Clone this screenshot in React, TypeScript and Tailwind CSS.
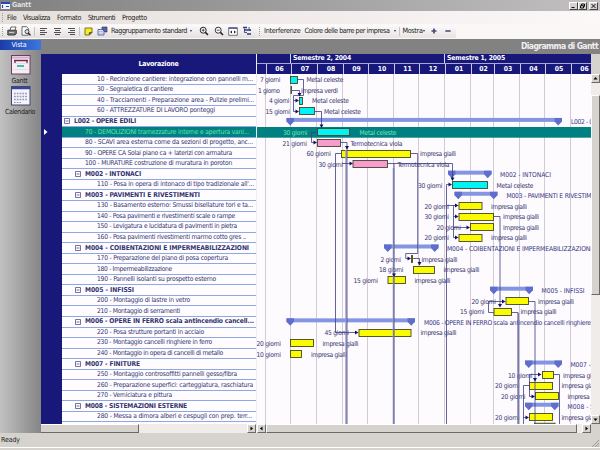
/**
 * Gantt planner window
 * Task outline on the left, time chart with dependencies on the right
 */
import React from 'react';

type Row = { label: string; level: 0 | 1 | 2 | 3; w: number };

// level 0 / 1 are group headings, 2 / 3 are tasks (2 = direct child of a top group)
// w is the printed width of the label
const rows: Row[] = [
  { label: '10 - Recinzione cantiere: integrazione con pannelli m...', level: 3, w: 156 },
  { label: '30 - Segnaletica di cantiere', level: 3, w: 76 },
  { label: '40 - Tracciamenti - Preparazione area - Pulizie prelimi...', level: 3, w: 157 },
  { label: '60 - ATTREZZATURE DI LAVORO ponteggi', level: 3, w: 118 },
  { label: 'L002 - OPERE EDILI', level: 0, w: 62 },
  { label: '70 - DEMOLIZIONI tramezzature interne e apertura vani...', level: 2, w: 164 },
  { label: '80 - SCAVI area esterna come da sezioni di progetto, anc...', level: 2, w: 168 },
  { label: '90 - OPERE CA Solai piano ca + laterizi con armatura', level: 2, w: 147 },
  { label: '100 - MURATURE costruzione di muratura in poroton', level: 2, w: 147 },
  { label: 'M002 - INTONACI', level: 1, w: 56 },
  { label: "110 - Posa in opera di intonaco di tipo tradizionale all'...", level: 3, w: 157 },
  { label: 'M003 - PAVIMENTI E RIVESTIMENTI', level: 1, w: 115 },
  { label: '130 - Basamento esterno: Smussi bisellature tori e ta...', level: 3, w: 156 },
  { label: '140 - Posa pavimenti e rivestimenti scale o rampe', level: 3, w: 138 },
  { label: '150 - Levigatura e lucidatura di pavimenti in pietra', level: 3, w: 140 },
  { label: '160 - Posa pavimenti rivestimenti marmo cotto gres ..', level: 3, w: 149 },
  { label: 'M004 - COIBENTAZIONI E IMPERMEABILIZZAZIONI', level: 1, w: 164 },
  { label: '170 - Preparazione del piano di posa copertura', level: 3, w: 131 },
  { label: '180 - Impermeabilizzazione', level: 3, w: 75 },
  { label: '190 - Pannelli isolanti su prospetto esterno', level: 3, w: 119 },
  { label: 'M005 - INFISSI', level: 1, w: 49 },
  { label: '200 - Montaggio di lastre in vetro', level: 3, w: 93 },
  { label: '210 - Montaggio di serramenti', level: 3, w: 83 },
  { label: 'M006 - OPERE IN FERRO scala antincendio cancell...', level: 1, w: 169 },
  { label: '220 - Posa strutture portanti in acciaio', level: 3, w: 107 },
  { label: '230 - Montaggio cancelli ringhiere in ferro', level: 3, w: 115 },
  { label: '240 - Montaggio in opera di cancelli di metallo', level: 3, w: 126 },
  { label: 'M007 - FINITURE', level: 1, w: 55 },
  { label: '250 - Montaggio controsoffitti pannelli gesso/fibra', level: 3, w: 140 },
  { label: '260 - Preparazione superfici: carteggiatura, raschiatura', level: 3, w: 156 },
  { label: '270 - Verniciatura e pittura', level: 3, w: 75 },
  { label: 'M008 - SISTEMAZIONI ESTERNE', level: 1, w: 102 },
  { label: '280 - Messa a dimora alberi e cespugli con prep. terr...', level: 3, w: 155 },
];

const SELECTED = 5;
const ROW_H = 10.55;
const rowY = (i: number) => 79.7 + i * ROW_H;

const padding = ['pl-[2px]', 'pl-[13px]', 'pl-[23px]', 'pl-[35px]'];

type Bar = { row: number; x1: number; x2: number; color: string; left: string; lx: number; right: string; rx: number };

const CYAN = '#00f4f4';
const PINK = '#f79ccc';
const YELLOW = '#fbfb00';

const bars: Bar[] = [
  { row: 0, x1: 290.5, x2: 297.5, color: CYAN, left: '7 giorni', lx: 260, right: 'Metal celeste', rx: 306.5 },
  { row: 1, x1: 291, x2: 291.5, color: '#00a000', left: '1 giorno', lx: 258, right: 'impresa verdi', rx: 301 },
  { row: 2, x1: 299.5, x2: 302.5, color: CYAN, left: '4 giorni', lx: 269, right: 'Metal celeste', rx: 312 },
  { row: 3, x1: 299.5, x2: 314.5, color: CYAN, left: '15 giorni', lx: 265.5, right: 'Metal celeste', rx: 324 },
  { row: 5, x1: 317.5, x2: 349.5, color: CYAN, left: '30 giorni', lx: 283, right: 'Metal celeste', rx: 359.5 },
  { row: 6, x1: 317.5, x2: 340.5, color: PINK, left: '21 giorni', lx: 282.5, right: 'Termotecnica viola', rx: 350.5 },
  { row: 7, x1: 341.5, x2: 410.5, color: YELLOW, left: '60 giorni', lx: 306.5, right: 'impresa gialli', rx: 420 },
  { row: 8, x1: 353, x2: 387.5, color: PINK, left: '30 giorni', lx: 318.5, right: 'Termotecnica viola', rx: 397.5 },
  { row: 10, x1: 452.5, x2: 487.5, color: CYAN, left: '30 giorni', lx: 418, right: 'Metal celeste', rx: 496.5 },
  { row: 12, x1: 459, x2: 482, color: YELLOW, left: '20 giorni', lx: 424.5, right: 'impresa gialli', rx: 491 },
  { row: 13, x1: 459, x2: 493.5, color: YELLOW, left: '30 giorni', lx: 424.5, right: 'impresa gialli', rx: 503 },
  { row: 14, x1: 470.5, x2: 493.5, color: YELLOW, left: '20 giorni', lx: 436.5, right: 'impresa gialli', rx: 503 },
  { row: 15, x1: 459, x2: 482, color: YELLOW, left: '20 giorni', lx: 424.5, right: 'impresa gialli', rx: 491 },
  { row: 17, x1: 411.5, x2: 412.5, color: YELLOW, left: '2 giorni', lx: 380.5, right: 'impresa gialli', rx: 421.5 },
  { row: 18, x1: 413.5, x2: 434.5, color: YELLOW, left: '18 giorni', lx: 379, right: 'impresa gialli', rx: 443.5 },
  { row: 19, x1: 388, x2: 405.5, color: YELLOW, left: '15 giorni', lx: 353.5, right: 'impresa gialli', rx: 414.5 },
  { row: 21, x1: 506, x2: 528.5, color: YELLOW, left: '20 giorni', lx: 471.5, right: 'impresa gialli', rx: 538 },
  { row: 22, x1: 494, x2: 511.5, color: YELLOW, left: '15 giorni', lx: 460, right: 'impresa gialli', rx: 520.5 },
  { row: 24, x1: 359, x2: 411, color: YELLOW, left: '45 giorni', lx: 324.5, right: 'impresa gialli', rx: 420.5 },
  { row: 25, x1: 290.5, x2: 313.5, color: YELLOW, left: '20 giorni', lx: 256.5, right: 'impresa gialli', rx: 322.5 },
  { row: 26, x1: 290.5, x2: 301.5, color: YELLOW, left: '10 giorni', lx: 256.5, right: 'impresa gialli', rx: 311 },
  { row: 28, x1: 542.5, x2: 553.5, color: YELLOW, left: '10 giorni', lx: 508, right: 'impresa gialli', rx: 563 },
  { row: 29, x1: 529.5, x2: 552.5, color: YELLOW, left: '20 giorni', lx: 495, right: 'impresa gialli', rx: 561.5 },
  { row: 30, x1: 535.5, x2: 558.5, color: YELLOW, left: '20 giorni', lx: 501, right: 'impresa gialli', rx: 567.5 },
  { row: 32, x1: 529.5, x2: 552.5, color: YELLOW, left: '20 giorni', lx: 495, right: 'impresa gialli', rx: 561.5 },
];

const textWidth: Record<string, number> = {
  'Metal celeste': 37,
  'impresa verdi': 37,
  'impresa gialli': 36,
  'Termotecnica viola': 52,
  '1 giorno': 22,
};

const summaries = [
  { row: 4, x1: 286.5, x2: 562, label: 'L002 - OPERE EDILI', lx: 571, w: 52 },
  { row: 9, x1: 448, x2: 491.5, label: 'M002 - INTONACI', lx: 500, w: 51 },
  { row: 11, x1: 454.5, x2: 497.5, label: 'M003 - PAVIMENTI E RIVESTIMENTI', lx: 506.5, w: 98 },
  { row: 16, x1: 384, x2: 438.5, label: 'M004 - COIBENTAZIONI E IMPERMEABILIZZAZIONI', lx: 447, w: 145 },
  { row: 20, x1: 490, x2: 533, label: 'M005 - INFISSI', lx: 541.5, w: 43 },
  { row: 23, x1: 286.5, x2: 415, label: 'M006 - OPERE IN FERRO scala antincendio cancelli ringhiere', lx: 424, w: 167 },
  { row: 27, x1: 525, x2: 562, label: 'M007 - FINITURE', lx: 570.5, w: 49 },
  { row: 31, x1: 525, x2: 558.5, label: 'M008 - SISTEMAZIONI', lx: 567.5, w: 66 },
];

const gridX = [265.5, 290.5, 316.5, 342.5, 367.5, 393.5, 418.5, 444.5, 470.5, 493.5, 519.5, 544.5, 570.5];

const links = [
  'M298 79.5H303.5V95.5H293.5V111.5H297 M293.5 100.5H297',
  'M291 90.5H299.5V94',
  'M315 111.5H321.5V126',
  'M317 132.5H311.5V142.5H315',
  'M341 142.5H347V424 M342 163.5H351',
  'M341 153.5H335.5V332.5H357',
  'M411 153.5H417.7V253.5H405.7V258.5H409',
  'M388 163.5H394V424',
  'M394 163.5H452.5V178',
  'M413 258.5H419.5V263',
  'M450 184.5H446.5V424',
  'M447 205.5H457 M453.5 205.5V237.5H457 M453.5 216.5H457 M453.5 227.5H469',
  'M494 216.5H500V305',
  'M504 301.5H488.5V312.5H494',
  'M529 301.5H535V424',
  'M511.5 312.5H518V424',
  'M540 374.5H529.5V396.5H533',
  'M553.5 374.5H559.5V424',
  'M529.5 385.5H523.5V424 M523.5 417.5H527',
];

const rightArrows = [
  [299, 111.5], [299, 100.5], [317, 142.5], [353, 163.5], [358.5, 332.5], [411, 258.5], [452, 184.5],
  [458.5, 205.5], [458.5, 216.5], [458.5, 237.5], [470, 227.5], [505.5, 301.5], [541.5, 374.5], [535, 396.5], [529, 417.5],
];

const downArrows = [
  [299.5, 96.5], [321.5, 128], [347, 149.5], [394, 277], [452.5, 181], [419.5, 265.5], [500, 307.5], [535, 381.5],
];

const months: [string, string][] = [
  ['', 'w-[9px]'], ['06', 'w-[25px]'], ['07', 'w-[26px]'], ['08', 'w-[26px]'], ['09', 'w-[25px]'],
  ['10', 'w-[26px]'], ['11', 'w-[25px]'], ['12', 'w-[26px]'], ['01', 'w-[26px]'], ['02', 'w-[23px]'],
  ['03', 'w-[26px]'], ['04', 'w-[25px]'], ['05', 'w-[26px]'], ['06', 'w-[25px]'],
];

// Fits a bold or regular label to its printed width
const FittedLabel: React.FC<{ text: string; width: number }> = ({ text, width }) => {
  const ref = React.useRef<HTMLSpanElement>(null);
  const [spacing, setSpacing] = React.useState(0);

  React.useLayoutEffect(() => {
    if (ref.current) {
      setSpacing((width - ref.current.getBoundingClientRect().width) / text.length);
    }
  }, [text, width]);

  return (
    <span ref={ref} className="whitespace-pre" style={{ letterSpacing: `${spacing}px` }}>
      {text}
    </span>
  );
};

const ArrowButton: React.FC<{ dir: 'left' | 'right' | 'up' | 'down' }> = ({ dir }) => {
  const d = {
    left: 'M5.5 2.5V6.5L3 4.5Z',
    right: 'M3.5 2.5V6.5L6 4.5Z',
    up: 'M2.5 5.5H6.5L4.5 3Z',
    down: 'M2.5 3.5H6.5L4.5 6Z',
  }[dir];
  return (
    <span className="flex h-[9px] w-[9px] shrink-0 border-t border-l border-r border-b border-t-white border-l-white border-r-[#6b6965] border-b-[#6b6965] bg-[#d6d3ce]">
      <svg viewBox="1 1 7 7" className="h-[7px] w-[7px]"><path d={d} fill="#000" /></svg>
    </span>
  );
};

const Grip = () => <span className="h-[9px] w-px shrink-0 border-l border-dotted border-[#a09c98]" />;

const TaskRow: React.FC<{ row: Row; selected: boolean }> = ({ row, selected }) => {
  const group = row.level < 2;
  return (
    <div
      className={`flex h-[10.55px] shrink-0 items-center overflow-hidden border-b border-[#8fa8e2] ${padding[row.level]} ${
        selected ? 'bg-[#008080] text-[#5fe8b0]' : 'bg-[#fefcff] text-[#34346e]'
      } ${group ? 'font-bold text-[#15155c]' : ''}`}
    >
      {group && (
        <svg viewBox="0 0 6 6" className="mr-[4px] h-[6px] w-[6px] shrink-0">
          <path d="M.5 .5H5.5V5.5H.5Z M1.5 3H4.5" fill="none" stroke="#50508c" strokeWidth=".8" />
        </svg>
      )}
      <FittedLabel text={row.label} width={row.w} />
    </div>
  );
};

const Chart = () => (
  <svg viewBox="257 74 334 350" className="block h-[350px] w-[334px] bg-[#fefbff]" fontSize="6.7">
    {gridX.map((x) => (
      <path key={x} d={`M${x} 74V424`} stroke="#d2ccd6" />
    ))}
    <rect x="257" y="127" width="334" height="10.7" fill="#008080" />

    {summaries.map((s) => {
      const y = rowY(s.row);
      return (
        <g key={s.row}>
          <rect x={s.x1} y={y - 4} width={s.x2 - s.x1} height="4" fill="#8496e2" />
          <path d={`M${s.x1} ${y - 4}h7.5v3.5l-3.7 4l-3.8 -4Z M${s.x2} ${y - 4}h-7.5v3.5l3.7 4l3.8 -4Z`} fill="#5f6dcc" />
          <text x={s.lx} y={y + 2.3} textLength={s.w} fill="#333380">{s.label}</text>
        </g>
      );
    })}

    {bars.map((b) => {
      const y = Math.round(rowY(b.row));
      const fill = b.row === SELECTED ? '#6fe8b8' : '#34346e';
      return (
        <g key={b.row}>
          <rect x={b.x1} y={y - 3.5} width={b.x2 - b.x1} height="7" fill={b.color} stroke="#45452c" strokeWidth=".9" />
          <text x={b.lx} y={rowY(b.row) + 2.5} textLength={textWidth[b.left] ?? (b.left.length > 8 ? 24.5 : 20.5)} fill={fill}>{b.left}</text>
          <text x={b.rx} y={rowY(b.row) + 2.5} textLength={textWidth[b.right]} fill={fill}>{b.right}</text>
        </g>
      );
    })}
    <rect x="534.5" y="423.3" width="20.5" height="4" fill={YELLOW} stroke="#45452c" />

    {/* dependencies */}
    <path d="M346 150V424 M393.5 168V424 M518.5 313V424" stroke="#a4a4c8" strokeWidth="1.6" fill="none" />
    {links.map((d) => (
      <path key={d} d={d} fill="none" stroke="#3c3c86" strokeWidth=".8" />
    ))}
    {rightArrows.map(([x, y]) => (
      <path key={`${x}-${y}`} d={`M${x} ${y}l-3.5 -2v4Z`} fill="#14145c" />
    ))}
    {downArrows.map(([x, y]) => (
      <path key={`${x}-${y}`} d={`M${x} ${y}l-2 -3.5h4Z`} fill="#14145c" />
    ))}
  </svg>
);

const AlignIcon: React.FC<{ d: string }> = ({ d }) => (
  <svg viewBox="0 0 9 9" className="h-[9px] w-[9px] shrink-0"><path d={d} stroke="#505050" strokeWidth="1" /></svg>
);

const Toolbar = () => (
  <div className="flex h-[15px] shrink-0 items-center bg-[#fbf7f6] pb-px text-[7.2px] text-[#222]">
    <div className="flex h-[13px] w-[255px] items-center bg-linear-to-b from-[#fcfafa] to-[#e4e0e0] pl-[2px]">
      <Grip />
      {/* print */}
      <svg viewBox="0 0 10 10" className="ml-[4px] h-[10px] w-[10px]">
        <path d="M3 4L4 1H9L8 4" fill="#fff" stroke="#444" strokeWidth=".8" />
        <path d="M.8 4.2H9.3V7.5L8 9H.8Z" fill="#777" stroke="#222" strokeWidth=".8" />
        <path d="M2 6.5H7" stroke="#ddd" strokeWidth=".8" />
      </svg>
      {/* preview */}
      <svg viewBox="0 0 10 10" className="ml-[4px] h-[10px] w-[10px]">
        <path d="M1 .7H5.5L7.3 2.5V9.2H1Z" fill="#fff" stroke="#444" strokeWidth=".8" />
        <circle cx="6" cy="5.6" r="2" fill="#dde6f0" stroke="#222" strokeWidth=".8" />
        <path d="M7.4 7L9.5 9.4" stroke="#222" strokeWidth="1.2" />
      </svg>
      <span className="mr-[4px] ml-[3px] h-[9px] w-px bg-[#c9c4c4]" />
      <AlignIcon d="M1 1.5H8M1 3.5H6M1 5.5H8M1 7.5H6" />
      <span className="w-[5px]" />
      <AlignIcon d="M1 1.5H8M2 3.5H7M1 5.5H8M2 7.5H7" />
      <span className="w-[5px]" />
      <AlignIcon d="M1 1.5H8M3 3.5H8M1 5.5H8M3 7.5H8" />
      <span className="mr-[4px] ml-[3px] h-[9px] w-px bg-[#c9c4c4]" />
      {/* note */}
      <svg viewBox="0 0 9 9" className="h-[9px] w-[9px]">
        <path d="M1 1H8V5.5L5.5 8H1Z" fill="#f6ee20" stroke="#6e6a10" strokeWidth=".9" />
        <path d="M5.3 8V5.5H8" fill="#555" stroke="#444" strokeWidth=".7" />
      </svg>
      {/* grouping */}
      <svg viewBox="0 0 11 10" className="ml-[4px] h-[10px] w-[11px]">
        <path d="M1 3.5H7V9H1Z" fill="#e8ecfa" stroke="#3a4a8c" strokeWidth=".8" />
        <path d="M5 1H10V6H8L5 3Z" fill="#56689e" stroke="#2b3a78" strokeWidth=".7" />
        <path d="M2 5.5H6M2 7.2H6" stroke="#8694c0" strokeWidth=".6" />
      </svg>
      <span className="ml-[3px]"><FittedLabel text="Raggruppamento standard" width={76} /></span>
      <span className="ml-[3px] border-x-[1.5px] border-t-2 border-x-transparent border-t-[#333]" />
      {/* zoom tools */}
      <svg viewBox="0 0 10 10" className="ml-[7px] h-[10px] w-[10px]">
        <circle cx="4.2" cy="4.2" r="3" fill="#fff" stroke="#222" />
        <path d="M2.7 4.2H5.7M4.2 2.7V5.7" stroke="#222" strokeWidth=".8" />
        <path d="M6.4 6.4L9 9" stroke="#222" strokeWidth="1.5" />
      </svg>
      <svg viewBox="0 0 10 10" className="ml-[5px] h-[10px] w-[10px]">
        <circle cx="4.2" cy="4.2" r="3" fill="#fff" stroke="#222" strokeWidth=".9" />
        <path d="M2.7 4.2H5.7" stroke="#222" strokeWidth=".8" />
        <path d="M6.4 6.4L9 9" stroke="#222" strokeWidth="1.5" />
      </svg>
      <svg viewBox="0 0 10 9" className="ml-[4px] h-[9px] w-[10px]">
        <path d="M.7 .7H9.3V8.3H.7Z" fill="#fff" stroke="#555" strokeWidth=".8" />
        <path d="M.7 1.2H9.3" stroke="#3a4a9c" strokeWidth="1.2" />
        <path d="M2 5L4 3.5V6.5ZM8 5L6 3.5V6.5Z" fill="#222" />
      </svg>
      <svg viewBox="0 0 10 10" className="ml-[4px] h-[10px] w-[10px]">
        <path d="M1 1.5H5M2 4H9M5 8H9" stroke="#2b3a9c" strokeWidth="1.6" />
        <path d="M2.5 2.5V6.5H5M7 1V3L8.5 5" stroke="#333" strokeWidth=".8" fill="none" />
      </svg>
    </div>
    <div className="flex h-[13px] w-[201px] items-center bg-linear-to-b from-[#fcfafa] to-[#e8e4e4] pl-[4px]">
      <Grip />
      <span className="ml-[4px]"><FittedLabel text="Interferenze" width={36.5} /></span>
      <span className="ml-[4px]"><FittedLabel text="Colore delle barre per impresa" width={85} /></span>
      <span className="ml-[4px] border-x-[1.5px] border-t-2 border-x-transparent border-t-[#333]" />
      <span className="mr-[3px] ml-[3px] h-[9px] w-px bg-[#c9c4c4]" />
      <FittedLabel text="Mostra" width={20} />
      <span className="border-x-[1.5px] border-t-2 border-x-transparent border-t-[#333]" />
      <svg viewBox="0 0 6 6" className="ml-[6px] h-[6px] w-[6px]"><path d="M3 .5V5.5M.5 3H5.5" stroke="#4a4a78" strokeWidth="1.7" /></svg>
      <svg viewBox="0 0 6 6" className="ml-[8px] h-[6px] w-[6px]"><path d="M.3 3H5.7" stroke="#4a4a78" strokeWidth="1.5" /></svg>
    </div>
  </div>
);

const WindowButton: React.FC<{ d: string }> = ({ d }) => (
  <span className="flex h-[8px] w-[9px] border border-t-white border-r-[#444] border-b-[#444] border-l-white bg-[#d6d3ce]">
    <svg viewBox="0 0 7 6" className="h-[6px] w-[7px]"><path d={d} fill="none" stroke="#111" strokeWidth="1" /></svg>
  </span>
);

const Sidebar = () => (
  <aside className="flex w-[41px] shrink-0 flex-col items-center bg-linear-to-r from-[#c2c2c2] to-[#858585] text-[7px] text-[#1c1c1c]">
    <div className="mt-px flex h-[10px] w-full items-center justify-center bg-linear-to-r from-[#1c3ca8] to-[#3c78dc] pr-[3px] text-white">
      <FittedLabel text="Vista" width={15} />
    </div>
    <svg viewBox="0 0 20 20" className="mt-[5px] h-[20px] w-[20px]">
      <rect x=".5" y=".5" width="18.5" height="18.5" fill="#f5eef4" stroke="#6a3c66" />
      <path d="M1 2.5H18.5" stroke="#d8a8cc" strokeWidth="2" />
      <path d="M3 5.5H17M4 5V8M16 5V8" stroke="#7c2450" strokeWidth="1.3" />
      <path d="M2 8.5H18M2 14.5H18" stroke="#d8d0dc" strokeWidth=".6" />
      <path d="M6 11H13" stroke="#10a894" strokeWidth="1.5" />
    </svg>
    <div className="mt-[1px] flex h-[10px] items-center pr-[2px]"><FittedLabel text="Gantt" width={16} /></div>
    <svg viewBox="0 0 20 20" className="h-[20px] w-[20px]">
      <rect x=".5" y=".5" width="18.5" height="18.5" fill="#f4f4fa" stroke="#44446c" />
      <path d="M1 2H19" stroke="#34449c" strokeWidth="2.5" />
      <path d="M3 7.5H17M3 10.5H17M3 13.5H17" stroke="#8c94bc" strokeWidth="1.5" strokeDasharray="1.7 1.1" />
      <path d="M3 16.5H10" stroke="#8c94bc" strokeWidth="1" strokeDasharray="1.7 1.1" />
    </svg>
    <div className="mt-[1px] flex h-[10px] items-center pr-px"><FittedLabel text="Calendario" width={30} /></div>
  </aside>
);

const App: React.FC = () => {
  return (
    <div
      className="flex h-[450px] w-[600px] flex-col overflow-hidden bg-[#d6d3ce] text-[6.7px] leading-none"
      style={{ fontFamily: '"DejaVu Sans Condensed", "DejaVu Sans", sans-serif' }}
    >
      {/* Title bar */}
      <div className="flex h-[11px] shrink-0 items-center bg-linear-to-r from-[#808080] to-[#c2c0c0] pr-[2px] pl-px text-[7px] font-bold text-[#e0e0e0]">
        <svg viewBox="0 0 9 7" className="mr-[2px] h-[7px] w-[9px]">
          <rect width="9" height="7" fill="#f4f4ff" />
          <path d="M0 1H9" stroke="#2848b8" strokeWidth="2" />
          <path d="M1.5 3V6M5 4.5H8" stroke="#2848b8" strokeWidth="1.2" />
        </svg>
        <FittedLabel text="Gantt" width={19} />
        <div className="ml-auto flex">
          <WindowButton d="M1.5 4.5H4.5" />
          <WindowButton d="M2.5 2.5V1H5.5V3.5H4.5M1.5 2.7H4.5V5H1.5Z" />
          <span className="w-[2px]" />
          <WindowButton d="M1.5 1L5.5 5M5.5 1L1.5 5" />
        </div>
      </div>

      {/* Menu */}
      <div className="flex h-[13px] shrink-0 items-center bg-linear-to-r from-[#e6e0dc] to-[#fcf8fa] pl-[2px] text-[7.2px] text-[#222]">
        <Grip />
        <span className="ml-[4px]"><FittedLabel text="File" width={9.5} /></span>
        <span className="ml-[6.5px]"><FittedLabel text="Visualizza" width={27} /></span>
        <span className="ml-[7px]"><FittedLabel text="Formato" width={24} /></span>
        <span className="ml-[7px]"><FittedLabel text="Strumenti" width={27} /></span>
        <span className="ml-[7px]"><FittedLabel text="Progetto" width={25} /></span>
      </div>

      <Toolbar />

      <div className="flex h-[394px] shrink-0">
        <Sidebar />
        <div className="flex w-[559px] flex-col">
          <div className="flex h-[15px] shrink-0 items-center justify-end bg-[#828282] pr-[2px] text-[8.6px] font-bold text-[#f0f0f0]">
            <FittedLabel text="Diagramma di Gantt" width={77} />
          </div>

          <div className="flex h-[379px]">
            {/* Task outline */}
            <section className="flex w-[215px] shrink-0 flex-col bg-[#18187a]">
              <div className="flex h-[20.4px] shrink-0 items-center justify-center pl-[20px] text-[7px] font-bold text-white">
                <FittedLabel text="Lavorazione" width={40} />
              </div>
              <div className="flex h-[349.6px] shrink-0">
                <div className="w-[20px] pt-[55px] pl-[3px]">
                  <svg viewBox="0 0 4 6" className="h-[6px] w-[4px]"><path d="M0 0V6L3.5 3Z" fill="#fff" /></svg>
                </div>
                <div className="flex w-[195px] flex-col overflow-hidden border-l border-[#18187a] bg-[#fefcff]">
                  {rows.map((row, i) => (
                    <TaskRow key={row.label} row={row} selected={i === SELECTED} />
                  ))}
                </div>
              </div>
              <div className="flex h-[9px] shrink-0 bg-[#efecea]">
                <span className="w-[98px] border-t border-r border-b border-t-white border-r-[#6b6965] border-b-[#6b6965] bg-[#d6d3ce]" />
                <span className="ml-auto flex"><ArrowButton dir="right" /></span>
              </div>
            </section>

            {/* Time chart */}
            <section className="flex w-[335px] shrink-0 flex-col overflow-hidden border-l border-[#f0edf2] bg-[#18187a] text-[6.8px] font-bold text-white">
              <div className="flex h-[10px] shrink-0 items-center border-b border-[#a8a8d8]">
                <span className="h-full w-[33px]" />
                <span className="flex h-full w-[154px] items-center border-l border-[#d8d8f0] pl-[2px]">
                  <FittedLabel text="Semestre 2, 2004" width={58} />
                </span>
                <span className="flex h-full flex-1 items-center border-l border-[#d8d8f0] pl-[2px]">
                  <FittedLabel text="Semestre 1, 2005" width={58} />
                </span>
              </div>
              <div className="flex h-[10px] shrink-0">
                {months.map(([m, w], i) => (
                  <span
                    key={i}
                    className={`flex shrink-0 items-center justify-center ${w} ${i > 0 ? 'border-l border-[#c8c8e8] pl-px' : ''}`}
                  >
                    {m}
                  </span>
                ))}
              </div>
              <div className="h-[350px] shrink-0 font-normal"><Chart /></div>
              <div className="flex h-[9px] shrink-0 bg-[#efecea]">
                <ArrowButton dir="left" />
                <span className="w-[311px] border-t border-l border-r border-b border-t-white border-l-white border-r-[#6b6965] border-b-[#6b6965] bg-[#d6d3ce]" />
                <span className="ml-auto flex"><ArrowButton dir="right" /></span>
              </div>
            </section>

            {/* Vertical scroll bar */}
            <div className="flex w-[9px] shrink-0 flex-col bg-[#efecea]">
              <div className="h-[20px] shrink-0 bg-[#d6d3ce]" />
              <ArrowButton dir="up" />
              <div className="mt-[12px] h-[200px] shrink-0 border-t border-l border-r border-b border-t-white border-l-white border-r-[#6b6965] border-b-[#6b6965] bg-[#d6d3ce]" />
              <div className="mt-auto"><ArrowButton dir="down" /></div>
              <div className="h-[9px] shrink-0 bg-[#d6d3ce]" />
            </div>
          </div>
        </div>
      </div>

      {/* Status bar */}
      <div className="flex h-[15px] shrink-0 items-center justify-between border-b border-white pl-px text-[7px] text-[#222]">
        <FittedLabel text="Ready" width={19} />
        <svg viewBox="0 0 8 8" className="mt-[5px] mr-px h-[8px] w-[8px]">
          <path d="M1 8L8 1M4 8L8 4M6.5 8L8 6.5" stroke="#8c8884" strokeWidth=".8" />
        </svg>
      </div>
    </div>
  );
};

export default App;
